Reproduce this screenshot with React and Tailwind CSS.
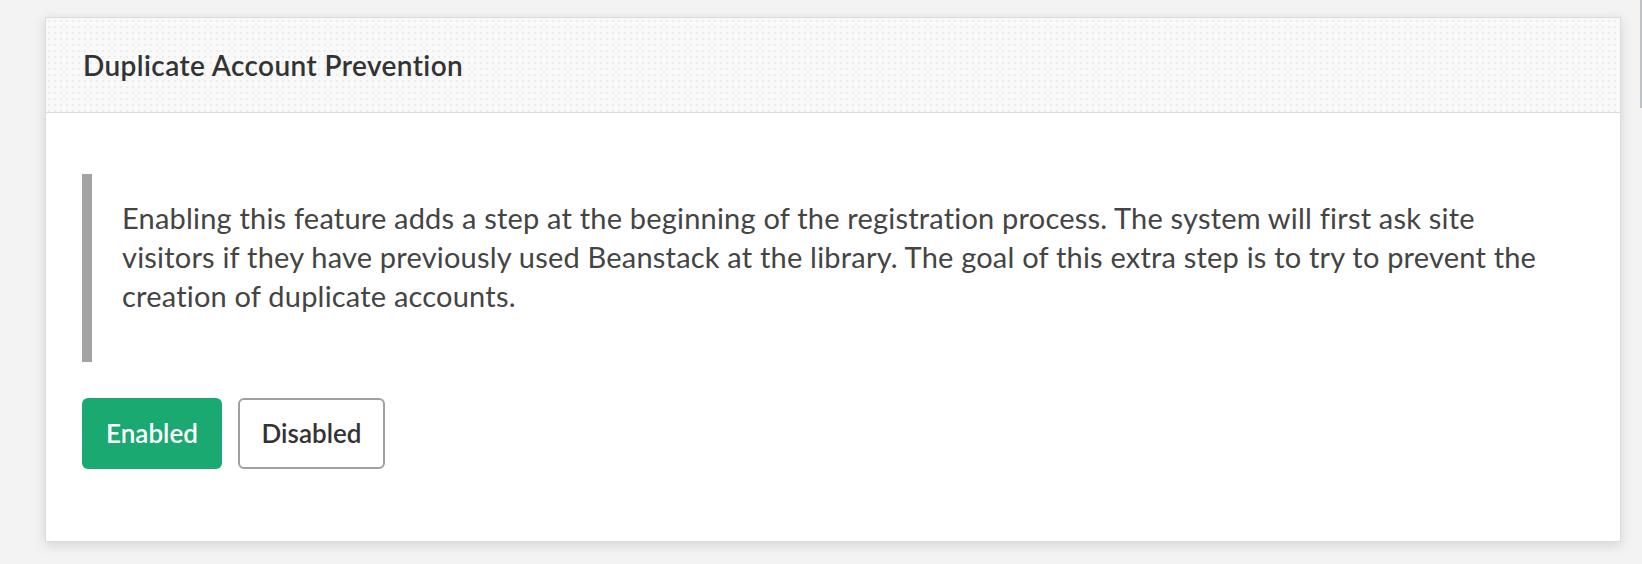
export default function App() {
  return (
    <div className="relative min-h-[564px] bg-[#f3f3f3] pt-[17px] pl-[45px] pr-[21px] font-['Lato',sans-serif]">
      {/* card */}
      <div className="border border-[#dcdcdc] bg-white shadow-[0_3px_12px_rgba(0,0,0,0.13)]">
        <div className="flex h-[95px] items-center border-b border-[#dcdcdc] bg-[#f9f9f9] bg-[radial-gradient(#ececec_1px,transparent_1.2px)] bg-[length:6px_6px] px-[37px]">
          <h2 className="text-[28px] font-semibold tracking-[0.4px] text-[#333]">Duplicate Account Prevention</h2>
        </div>

        <div className="px-[36px] pt-[61px] pb-[72px]">
          <blockquote className="border-l-[10px] border-[#a3a3a3] pt-[24px] pb-[47px] pl-[30px] pr-[20px]">
            <p className="text-[29px] leading-[39px] tracking-[0.2px] text-[#444]">
              Enabling this feature adds a step at the beginning of the registration process. The system will first ask site visitors if they have previously used Beanstack at the library. The goal of this extra step is to try to prevent the creation of duplicate accounts.
            </p>
          </blockquote>

          <div className="mt-[36px] flex gap-[16px]">
            <button className="h-[71px] w-[140px] rounded-[6px] bg-[#1aa971] text-[26px] font-semibold text-white">
              Enabled
            </button>
            <button className="h-[71px] w-[147px] rounded-[6px] border-2 border-[#a0a0a0] bg-white text-[26px] font-semibold text-[#333]">
              Disabled
            </button>
          </div>
        </div>
      </div>

      {/* scrollbar sliver at the window edge */}
      <div className="absolute right-0 top-0 h-[108px] w-[2px] bg-[#b9c3c8]" />
    </div>
  )
}
